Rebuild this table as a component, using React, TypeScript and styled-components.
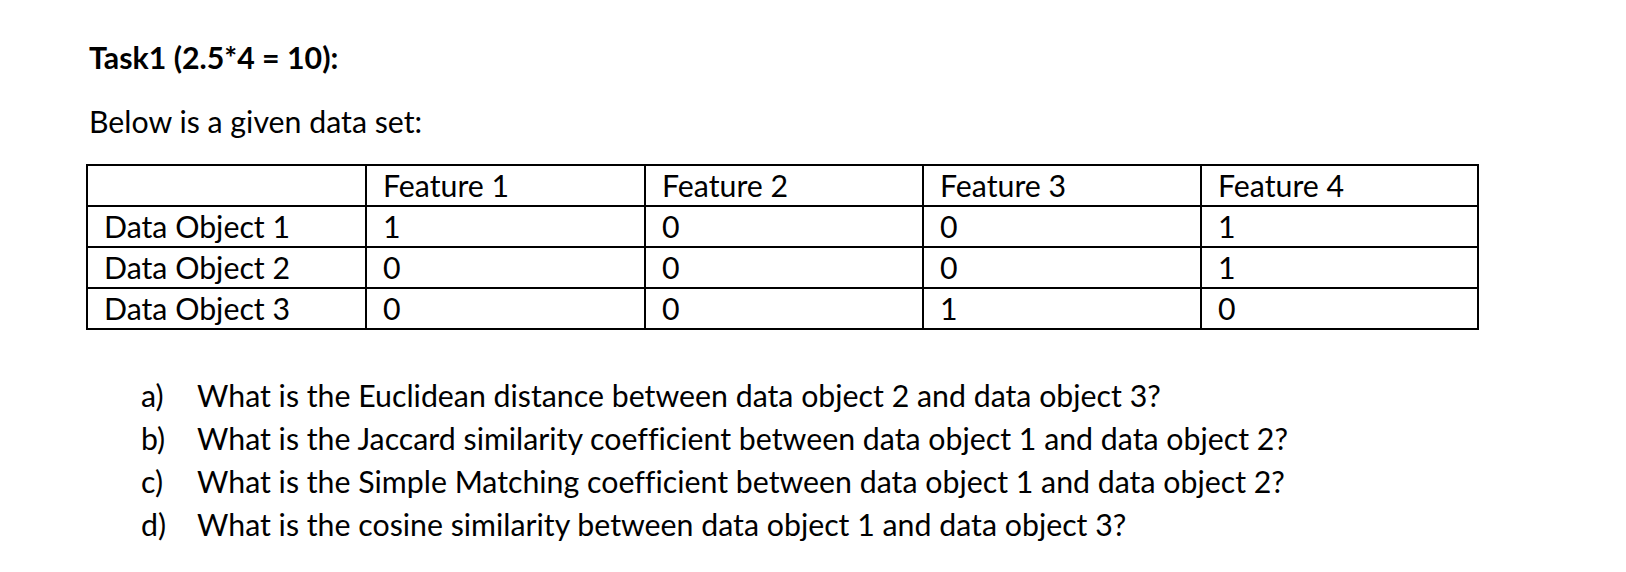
import React from "react";
import styled, { createGlobalStyle } from "styled-components";

const GlobalStyle = createGlobalStyle`
  html, body {
    margin: 0;
    padding: 0;
    background: #ffffff;
  }
  body {
    font-family: Lato, "Liberation Sans", Arial, sans-serif;
    font-size: 30.3px;
    font-variant-ligatures: none;
    color: #000000;
  }
`;

const Page = styled.main`
  width: 1626px;
  height: 572px;
  box-sizing: border-box;
  padding: 37px 0 0 89px;
  overflow: hidden;
`;

const Title = styled.h1`
  margin: 0;
  font-size: 30.3px;
  font-weight: 700;
  line-height: 40px;
`;

const Paragraph = styled.p`
  margin: 24px 0 0;
  line-height: 40px;
`;

const DataTable = styled.table`
  margin: 23px 0 0 -3px;
  width: 1393px;
  table-layout: fixed;
  border-collapse: separate;
  border-spacing: 0;
  border-top: 2px solid #000;
  border-left: 2px solid #000;
`;

const Cell = styled.td`
  box-sizing: border-box;
  width: ${(p: { $w: number }) => p.$w}px;
  padding: 0 0 0 16px;
  height: 41px;
  line-height: 39px;
  border-right: 2px solid #000;
  border-bottom: 2px solid #000;
  font-weight: 400;
  text-align: left;
  white-space: nowrap;
  vertical-align: middle;
`;

const Questions = styled.ol`
  list-style: none;
  margin: 44px 0 0;
  padding: 0 0 0 52px;
`;

const Question = styled.li`
  display: flex;
  line-height: 43px;
`;

const Marker = styled.span`
  flex: 0 0 56px;
`;

const widths = [279, 279, 278, 278, 277];
const header = ["", "Feature 1", "Feature 2", "Feature 3", "Feature 4"];
const rows = [
  ["Data Object 1", "1", "0", "0", "1"],
  ["Data Object 2", "0", "0", "0", "1"],
  ["Data Object 3", "0", "0", "1", "0"],
];
const questions = [
  ["a)", "What is the Euclidean distance between data object 2 and data object 3?"],
  ["b)", "What is the Jaccard similarity coefficient between data object 1 and data object 2?"],
  ["c)", "What is the Simple Matching coefficient between data object 1 and data object 2?"],
  ["d)", "What is the cosine similarity between data object 1 and data object 3?"],
];

export default function App() {
  return (
    <>
      <GlobalStyle />
      <Page>
        <Title>Task1 (2.5*4 = 10):</Title>
        <Paragraph>Below is a given data set:</Paragraph>
        <DataTable>
          <thead>
            <tr>
              {header.map((h, i) => (
                <Cell as="th" key={i} $w={widths[i]}>
                  {h}
                </Cell>
              ))}
            </tr>
          </thead>
          <tbody>
            {rows.map((r, ri) => (
              <tr key={ri}>
                {r.map((c, ci) => (
                  <Cell key={ci} $w={widths[ci]}>
                    {c}
                  </Cell>
                ))}
              </tr>
            ))}
          </tbody>
        </DataTable>
        <Questions>
          {questions.map(([m, q]) => (
            <Question key={m}>
              <Marker>{m}</Marker>
              <span>{q}</span>
            </Question>
          ))}
        </Questions>
      </Page>
    </>
  );
}
